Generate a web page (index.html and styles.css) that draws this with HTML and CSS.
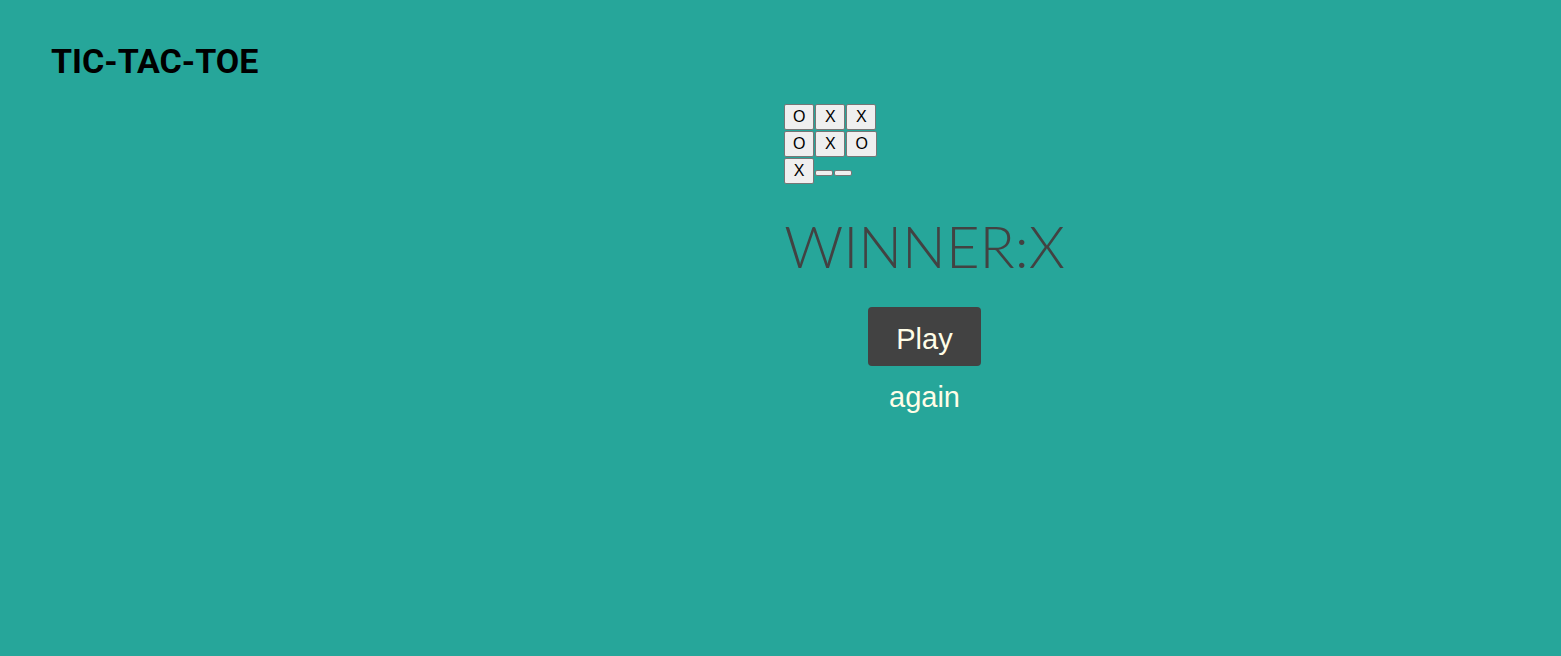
FILE: index.html
```html
<!DOCTYPE html>
<html lang="en">
<head>
<meta charset="utf-8">
<title>Tic-Tac-Toe</title>
<link rel="stylesheet" href="styles.css">
</head>
<body>
<header class="header">
  <h1 class="title">TIC-TAC-TOE</h1>
</header>
<main class="main">
  <section class="game">
    <div class="board">
      <div class="row">
        <button class="cell">O</button><button class="cell">X</button><button class="cell">X</button>
      </div>
      <div class="row">
        <button class="cell">O</button><button class="cell">X</button><button class="cell">O</button>
      </div>
      <div class="row">
        <button class="cell">X</button><button class="cell"></button><button class="cell"></button>
      </div>
    </div>
    <h2 class="winner">WINNER:X</h2>
    <button class="play">Play again</button>
  </section>
</main>
</body>
</html>
```
FILE: styles.css
```css
html, body {
  margin: 0;
  padding: 0;
}

body {
  background: #26a69a;
  min-height: 656px;
  font-family: "Liberation Sans", Arial, sans-serif;
}

.header {
  padding: 41px 0 0 51px;
}

.title {
  margin: 0;
  font-family: Roboto, "Liberation Sans", sans-serif;
  font-weight: 700;
  font-size: 34px;
  line-height: 41px;
  color: #000;
}

.main {
  padding-left: 784px;
  padding-top: 22px;
}

.game {
  width: 281px;
  display: flex;
  flex-direction: column;
  align-items: center;
}

.board {
  align-self: flex-start;
  display: flex;
  flex-direction: column;
  gap: 1px;
}

.row {
  display: flex;
  align-items: baseline;
  gap: 1px;
}

.cell {
  font-family: "Liberation Sans", Arial, sans-serif;
  font-size: 16px;
  line-height: 18px;
  padding: 2px 8px;
  color: #000;
  background: #efefef;
  border: 1px solid #767676;
  border-radius: 2px;
  box-sizing: border-box;
  height: 26px;
  min-width: 30px;
}

.cell:empty {
  height: 6px;
  min-width: 18px;
  padding: 0;
}

.winner {
  margin: 27px 0 0;
  font-family: Lato, "Open Sans", sans-serif;
  font-weight: 300;
  font-size: 58px;
  line-height: 70px;
  color: #424242;
  text-align: center;
}

.play {
  margin-top: 26px;
  width: 113px;
  height: 59px;
  padding: 3px 0 0;
  border: 0;
  border-radius: 4px;
  background: #424242;
  color: #fffde7;
  font-family: "Liberation Sans", Arial, sans-serif;
  font-size: 29px;
  line-height: 58px;
  text-align: center;
  overflow: visible;
  display: flex;
  justify-content: center;
  align-items: flex-start;
  flex-wrap: wrap;
}
```
